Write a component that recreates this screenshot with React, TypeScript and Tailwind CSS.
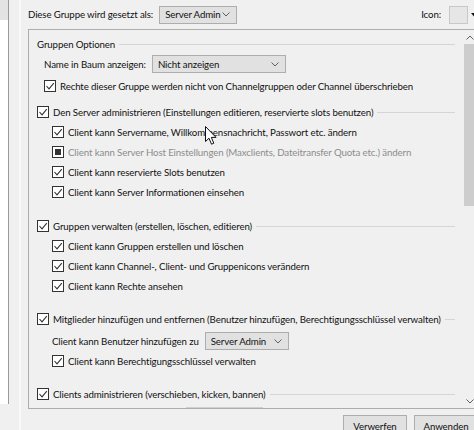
import type { ReactNode } from "react";

function CheckBox({ checked = true, disabled = false }: { checked?: boolean; disabled?: boolean }) {
  return (
    <span className="flex h-[12px] w-[12px] shrink-0 items-center justify-center border border-[#333333] bg-white">
      {disabled ? (
        <span className="h-[6px] w-[6px] bg-[#333333]" />
      ) : checked ? (
        <svg width="10" height="10" viewBox="0 0 10 10">
          <polyline points="1.5,5 4,7.8 8.8,2.2" fill="none" stroke="#333333" strokeWidth="1.1" />
        </svg>
      ) : null}
    </span>
  );
}

function Chevron() {
  return (
    <svg width="8" height="5" viewBox="0 0 8 5" className="shrink-0">
      <polyline points="0.5,0.5 4,4 7.5,0.5" fill="none" stroke="#606060" strokeWidth="1" />
    </svg>
  );
}

function Select({ value, className }: { value: string; className: string }) {
  return (
    <div
      className={`flex h-[18px] shrink-0 items-center justify-between whitespace-nowrap border border-[#adadad] bg-[#e1e1e1] pl-[5px] pr-[6px] ${className}`}
    >
      <span>{value}</span>
      <Chevron />
    </div>
  );
}

function Row({ children, className = "" }: { children: ReactNode; className?: string }) {
  return (
    <div className={`flex h-[20px] shrink-0 items-center whitespace-nowrap ${className}`}>{children}</div>
  );
}

function CheckRow({
  label,
  indent = false,
  disabled = false,
  className = "",
}: {
  label: string;
  indent?: boolean;
  disabled?: boolean;
  className?: string;
}) {
  return (
    <Row className={`gap-[4px] ${indent ? "pl-[15px]" : ""} ${className}`}>
      <CheckBox disabled={disabled} />
      <span className={disabled ? "text-[#8c8c8c]" : ""}>{label}</span>
    </Row>
  );
}

function GroupHeader({ children, className = "" }: { children: ReactNode; className?: string }) {
  return (
    <Row className={`gap-[4px] ${className}`}>
      {children}
      <span className="h-px flex-1 bg-[#d5d5d5]" />
    </Row>
  );
}

const serverItems = [
  { label: "Client kann Servername, Willkommensnachricht, Passwort etc. ändern" },
  {
    label: "Client kann Server Host Einstellungen (Maxclients, Dateitransfer Quota etc.) ändern",
    disabled: true,
  },
  { label: "Client kann reservierte Slots benutzen" },
  { label: "Client kann Server Informationen einsehen" },
];

const groupItems = [
  "Client kann Gruppen erstellen und löschen",
  "Client kann Channel-, Client- und Gruppenicons verändern",
  "Client kann Rechte ansehen",
];

export default function App() {
  return (
    <div className="relative flex h-[430px] w-[474px] overflow-hidden bg-[#f0f0f0] font-['Lato',sans-serif] text-[9.7px] tracking-[-0.12px] text-[#111111]">
      {/* left list, almost hidden */}
      <div className="flex h-[404px] w-[9px] shrink-0 flex-col border-r border-[#9a9a9a] bg-white">
        <div className="h-[20px] bg-[#e3e3e3]" />
      </div>
      <div className="ml-[10px] h-full w-[2px] shrink-0 bg-[#f9f9f9]" />

      <div className="ml-[7px] flex w-[453px] shrink-0 flex-col">
        {/* top row */}
        <div className="flex h-[29px] shrink-0 items-center whitespace-nowrap">
          <span>Diese Gruppe wird gesetzt als:</span>
          <Select value="Server Admin" className="ml-[6px] w-[78px]" />
          <span className="ml-auto">Icon:</span>
          <div className="ml-[8px] h-[18px] w-[19px] border border-[#c8c8c8] bg-[#e6e6e6]" />
          <svg width="13" height="18" viewBox="0 0 13 18" className="shrink-0">
            <polygon points="3,7 10,7 6.5,11" fill="#111111" />
          </svg>
        </div>

        {/* options panel */}
        <div className="flex h-[380px] shrink-0 border border-[#adadad]">
          <div className="flex min-w-0 flex-1 flex-col pl-[8px] pr-[8px] pt-[4px]">
            <GroupHeader>
              <span>Gruppen Optionen</span>
            </GroupHeader>
            <Row className="pl-[7px]">
              <span>Name in Baum anzeigen:</span>
              <Select value="Nicht anzeigen" className="ml-[6px] w-[134px]" />
            </Row>
            <CheckRow
              className="mt-[2px] pl-[7px]"
              label="Rechte dieser Gruppe werden nicht von Channelgruppen oder Channel überschrieben"
            />

            <GroupHeader className="mt-[6px] h-[19px]">
              <CheckBox />
              <span>Den Server administrieren (Einstellungen editieren, reservierte slots benutzen)</span>
            </GroupHeader>
            {serverItems.map((item) => (
              <CheckRow key={item.label} indent label={item.label} disabled={item.disabled} />
            ))}

            <GroupHeader className="mt-[14px]">
              <CheckBox />
              <span>Gruppen verwalten (erstellen, löschen, editieren)</span>
            </GroupHeader>
            {groupItems.map((label) => (
              <CheckRow key={label} indent label={label} />
            ))}

            <GroupHeader className="mt-[13px]">
              <CheckBox />
              <span>Mitglieder hinzufügen und entfernen (Benutzer hinzufügen, Berechtigungsschlüssel verwalten)</span>
            </GroupHeader>
            <Row className="mt-[2px] pl-[15px]">
              <span>Client kann Benutzer hinzufügen zu</span>
              <Select value="Server Admin" className="ml-[6px] w-[84px]" />
            </Row>
            <CheckRow indent label="Client kann Berechtigungsschlüssel verwalten" />

            <GroupHeader className="mt-[13px]">
              <CheckBox />
              <span>Clients administrieren (verschieben, kicken, bannen)</span>
            </GroupHeader>
            <div className="ml-[149px] mt-[3px] h-px w-[77px] shrink-0 bg-[#d0d0d0]" />
          </div>

          {/* scrollbar */}
          <div className="flex w-[17px] shrink-0 flex-col bg-[#f0f0f0]">
            <div className="flex h-[14px] shrink-0 items-center pl-[3px]">
              <svg width="8" height="5" viewBox="0 0 8 5">
                <polyline points="0.5,4.5 4,1 7.5,4.5" fill="none" stroke="#606060" strokeWidth="1" />
              </svg>
            </div>
            <div className="ml-px h-[162px] w-[15px] shrink-0 bg-[#cdcdcd]" />
            <div className="flex-1" />
            <div className="flex h-[14px] shrink-0 items-center pl-[3px]">
              <Chevron />
            </div>
          </div>
        </div>

        {/* buttons */}
        <div className="mt-[6px] flex shrink-0 justify-end gap-[7px] pr-[3px]">
          <div className="flex h-[22px] w-[64px] items-center justify-center border border-[#adadad] bg-[#e1e1e1] pt-px">
            Verwerfen
          </div>
          <div className="flex h-[22px] w-[64px] items-center justify-center border border-[#adadad] bg-[#e1e1e1] pt-px">
            Anwenden
          </div>
        </div>
      </div>

      {/* mouse cursor */}
      <svg width="13" height="20" viewBox="0 0 13 20" className="absolute left-[205px] top-[126px]">
        <path
          d="M0.5,0.5 L0.5,15.5 L4,12.2 L6.5,18.2 L8.8,17.2 L6.3,11.4 L11,11.4 Z"
          fill="#ffffff"
          stroke="#111111"
          strokeWidth="1"
          strokeLinejoin="round"
        />
      </svg>
    </div>
  );
}
